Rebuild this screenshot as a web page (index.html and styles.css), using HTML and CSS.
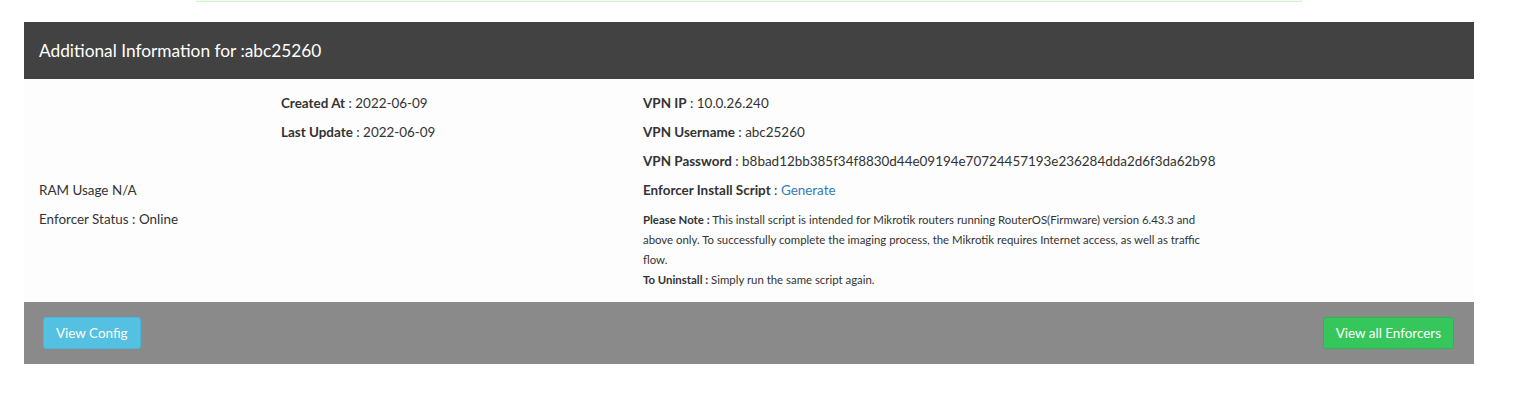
FILE: index.html
```html
<!DOCTYPE html>
<html lang="en">
<head>
<meta charset="utf-8">
<title>Additional Information</title>
<link rel="stylesheet" href="styles.css">
</head>
<body>
<div class="page">
  <div class="alert-edge"></div>
  <div class="panel">
    <div class="panel-heading">Additional Information for :abc25260</div>
    <div class="panel-body">
      <div class="col col-left">
        <p>RAM Usage N/A</p>
        <p>Enforcer Status : Online</p>
      </div>
      <div class="col col-mid">
        <p><b>Created At</b> : 2022-06-09</p>
        <p><b>Last Update</b> : 2022-06-09</p>
      </div>
      <div class="col col-right">
        <p><b>VPN IP</b> : 10.0.26.240</p>
        <p><b>VPN Username</b> : abc25260</p>
        <p><b>VPN Password</b> : b8bad12bb385f34f8830d44e09194e70724457193e236284dda2d6f3da62b98</p>
        <p><b>Enforcer Install Script</b> : <a href="#" class="link">Generate</a></p>
        <p class="note"><b>Please Note :</b> This install script is intended for Mikrotik routers running RouterOS(Firmware) version 6.43.3 and above only. To successfully complete the imaging process, the Mikrotik requires Internet access, as well as traffic flow.<br><b>To Uninstall :</b> Simply run the same script again.</p>
      </div>
    </div>
    <div class="panel-footer">
      <button class="btn btn-info">View Config</button>
      <button class="btn btn-success">View all Enforcers</button>
    </div>
  </div>
</div>
</body>
</html>
```
FILE: styles.css
```css
html, body {
  margin: 0;
  padding: 0;
  background: #ffffff;
}
body {
  font-family: Lato, "Open Sans", "Liberation Sans", sans-serif;
  font-size: 13.45px;
  line-height: 19px;
  color: #333333;
}
.page {
  margin: 0 40px 0 24px;
}
.alert-edge {
  width: 1106px;
  height: 1px;
  margin: 0 auto 20px;
  background: #f2fbef;
  border-bottom: 1px solid #d9f0d0;
}
.panel {
  background: #fdfdfd;
}
.panel-heading {
  background: #424242;
  color: #ffffff;
  font-size: 17.3px;
  line-height: 21px;
  padding: 18px 15px;
}
.panel-body {
  display: grid;
  grid-template-columns: 242px 362px 604px 1fr;
  padding: 15px 0 12px;
}
.col {
  padding: 0 15px;
}
.col p {
  margin: 0 0 10px;
}
.col-left {
  padding-top: 87px;
}
.col-right .note {
  font-size: 11.4px;
  line-height: 20px;
  margin: 0;
}
.link {
  color: #337ab7;
  text-decoration: none;
}
.panel-footer {
  background: #8a8a8a;
  display: flex;
  justify-content: space-between;
  align-items: center;
  padding: 15px 20px 15px 19px;
}
.btn {
  font-family: inherit;
  font-size: 13.45px;
  line-height: 18px;
  padding: 6px 12px;
  border-radius: 3px;
  color: #ffffff;
  cursor: pointer;
}
.btn-info {
  background: #54c0e2;
  border: 1px solid #46b8da;
}
.btn-success {
  background: #35c75c;
  border: 1px solid #2db552;
}
```
